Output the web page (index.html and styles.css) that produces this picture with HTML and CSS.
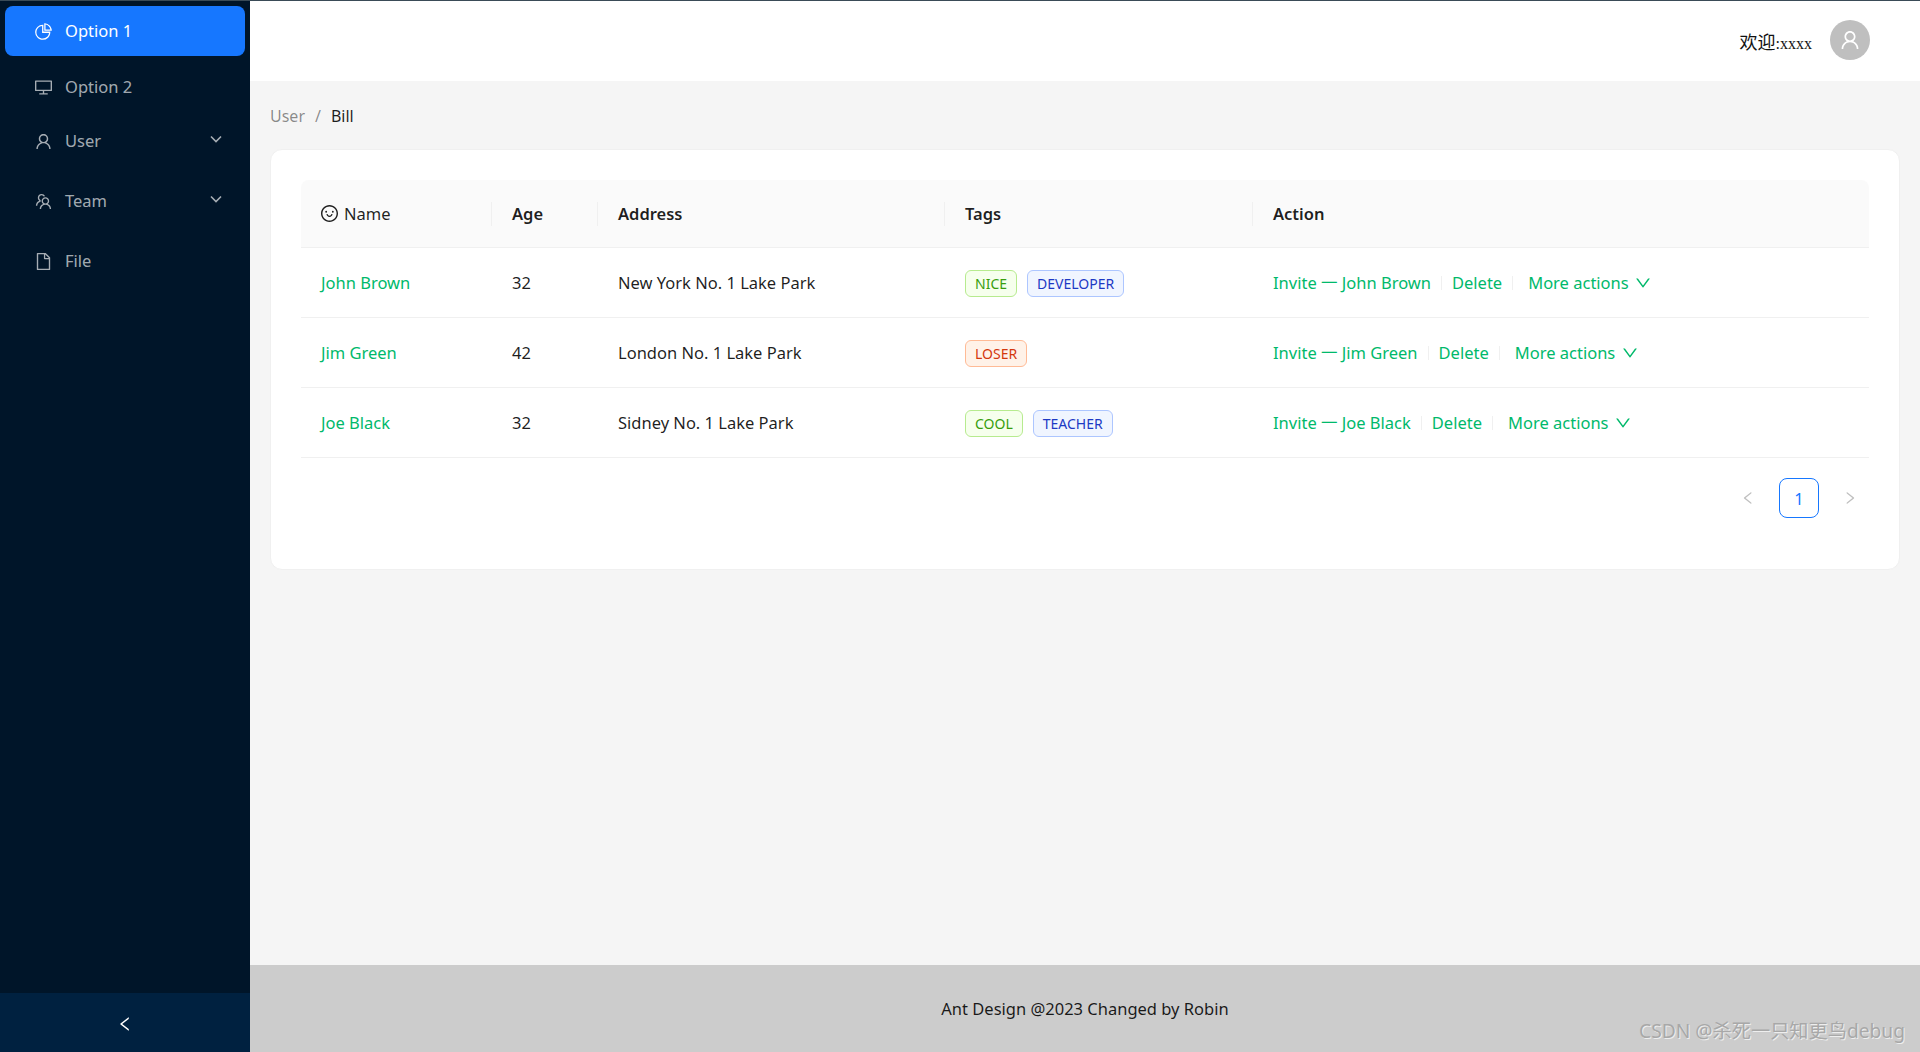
FILE: index.html
```html
<!DOCTYPE html>
<html lang="en">
<head>
<meta charset="utf-8">
<title>Bill</title>
<link rel="stylesheet" href="styles.css">
</head>
<body>
<svg class="sprite" aria-hidden="true">
  <symbol id="i-pie" viewBox="64 64 896 896"><path d="M864 518H506V160c0-4.4-3.6-8-8-8h-26a398.46 398.46 0 0 0-282.8 117.1 398.19 398.19 0 0 0-85.7 127.1A397.61 397.61 0 0 0 72 552a398.46 398.46 0 0 0 117.1 282.8c36.7 36.7 79.5 65.6 127.1 85.7A397.61 397.61 0 0 0 472 952a398.46 398.46 0 0 0 282.8-117.1c36.7-36.7 65.6-79.5 85.7-127.1A397.61 397.61 0 0 0 872 552v-26c0-4.4-3.6-8-8-8zM705.7 787.8A331.59 331.59 0 0 1 470.4 884c-88.1-.4-170.9-34.9-233.2-97.2C174.5 724.1 140 640.7 140 552c0-88.7 34.5-172.1 97.2-234.8 54.6-54.6 124.9-87.9 200.8-95.5V586h364.3c-7.7 76.3-41.3 147-96.6 201.8zM952 462.4l-2.6-28.2c-8.5-92.1-49.4-179-115.2-244.6A399.4 399.4 0 0 0 589 74.6L560.7 72c-4.7-.4-8.7 3.2-8.7 7.9V464c0 4.4 3.6 8 8 8l384-1c4.7 0 8.4-4 8-8.6zm-332.2-58.2V147.6a332.24 332.24 0 0 1 166.4 89.8c45.7 45.6 77 103.6 90 166.1l-256.4.7z"/></symbol>
  <symbol id="i-desktop" viewBox="64 64 896 896"><path d="M928 140H96c-17.7 0-32 14.3-32 32v496c0 17.7 14.3 32 32 32h380v112H304c-8.8 0-16 7.2-16 16v48c0 4.4 3.6 8 8 8h432c4.4 0 8-3.6 8-8v-48c0-8.8-7.2-16-16-16H548V700h380c17.7 0 32-14.3 32-32V172c0-17.7-14.3-32-32-32zm-40 488H136V212h752v416z"/></symbol>
  <symbol id="i-user" viewBox="64 64 896 896"><path d="M858.5 763.6a374 374 0 0 0-80.6-119.5 375.63 375.63 0 0 0-119.5-80.6c-.4-.2-.8-.3-1.2-.5C719.5 518 760 444.7 760 362c0-137-111-248-248-248S264 225 264 362c0 82.7 40.5 156 102.8 201.1-.4.2-.8.3-1.2.5-44.8 18.9-85 46-119.5 80.6a375.63 375.63 0 0 0-80.6 119.5A371.7 371.7 0 0 0 136 901.8a8 8 0 0 0 8 8.2h60c4.4 0 7.9-3.5 8-7.8 2-77.2 33-149.5 87.8-204.3 56.7-56.7 132-87.9 212.2-87.9s155.5 31.2 212.2 87.9C779 752.7 810 825 812 902.2c.1 4.4 3.6 7.8 8 7.8h60a8 8 0 0 0 8-8.2c-1-47.8-10.9-94.3-29.5-138.2zM512 534c-45.9 0-89.1-17.9-121.6-50.4S340 407.9 340 362c0-45.9 17.9-89.1 50.4-121.6S466.1 190 512 190s89.1 17.9 121.6 50.4S684 316.1 684 362c0 45.9-17.9 89.1-50.4 121.6S557.9 534 512 534z"/></symbol>
  <symbol id="i-team" viewBox="64 64 896 896"><path d="M824.2 699.9a301.55 301.55 0 0 0-86.4-60.4C783.1 602.8 812 546.8 812 484c0-110.8-92.4-201.7-203.2-200-109.1 1.7-197 90.6-197 200 0 62.8 29 118.8 74.2 155.5a300.95 300.95 0 0 0-86.4 60.4C345 754.6 314 826.8 312 903.8a8 8 0 0 0 8 8.2h56c4.3 0 7.9-3.4 8-7.7 1.9-58 25.4-112.3 66.7-153.5A226.62 226.62 0 0 1 612 684c60.9 0 118.2 23.7 161.3 66.8C814.5 792 838 846.3 840 904.3c.1 4.3 3.7 7.7 8 7.7h56a8 8 0 0 0 8-8.2c-2-77-33-149.2-87.8-203.9zM612 612c-34.2 0-66.4-13.3-90.5-37.5a126.86 126.86 0 0 1-37.5-91.8c.3-32.8 13.4-64.5 36.3-88 24-24.6 56.1-38.3 90.4-38.7 33.9-.3 66.8 12.9 91 36.6 24.8 24.3 38.4 56.8 38.4 91.4 0 34.2-13.3 66.3-37.5 90.5A127.3 127.3 0 0 1 612 612zM361.5 510.4c-.9-8.7-1.4-17.5-1.4-26.4 0-15.9 1.5-31.4 4.3-46.5.7-3.6-1.2-7.3-4.5-8.8-13.6-6.1-26.1-14.5-36.9-25.1a127.54 127.54 0 0 1-38.7-95.4c.9-32.1 13.8-62.6 36.3-85.6 24.7-25.3 57.9-39.1 93.2-38.7 31.9.3 62.7 12.6 86 34.4 7.9 7.4 14.7 15.6 20.4 24.4 2 3.1 5.9 4.4 9.3 3.2 17.6-6.1 36.2-10.4 55.3-12.4 5.6-.6 8.8-6.6 6.3-11.6-32.5-64.3-98.9-108.7-175.7-109.9-110.9-1.7-203.3 89.2-203.3 199.9 0 62.8 28.9 118.8 74.2 155.5-31.8 14.7-61.1 35-86.5 60.4-54.8 54.7-85.8 126.9-87.8 204a8 8 0 0 0 8 8.2h56.1c4.3 0 7.9-3.4 8-7.7 1.9-58 25.4-112.3 66.7-153.5 29.4-29.4 65.4-49.8 104.7-59.7 3.9-1 6.5-4.7 6-8.7z"/></symbol>
  <symbol id="i-file" viewBox="64 64 896 896"><path d="M854.6 288.6L639.4 73.4c-6-6-14.1-9.4-22.6-9.4H192c-17.7 0-32 14.3-32 32v832c0 17.7 14.3 32 32 32h640c17.7 0 32-14.3 32-32V311.3c0-8.5-3.4-16.7-9.4-22.7zM790.2 326H602V137.8L790.2 326zm1.8 562H232V136h302v216a42 42 0 0 0 42 42h216v494z"/></symbol>
  <symbol id="i-smile" viewBox="64 64 896 896"><path d="M288 421a48 48 0 1 0 96 0 48 48 0 1 0-96 0zm352 0a48 48 0 1 0 96 0 48 48 0 1 0-96 0zM512 64C264.6 64 64 264.6 64 512s200.6 448 448 448 448-200.6 448-448S759.4 64 512 64zm263 711c-34.2 34.2-74 61-118.3 79.8C611 874.2 562.3 884 512 884c-50.3 0-99-9.8-144.8-29.2A370.4 370.4 0 0 1 248.9 775c-34.2-34.2-61-74-79.8-118.3C149.8 611 140 562.3 140 512s9.8-99 29.2-144.8A370.4 370.4 0 0 1 249 248.9c34.2-34.2 74-61 118.3-79.8C413 149.8 461.7 140 512 140c50.3 0 99 9.8 144.8 29.2A370.4 370.4 0 0 1 775.1 249c34.2 34.2 61 74 79.8 118.3C874.2 413 884 461.7 884 512s-9.8 99-29.2 144.8A368.89 368.89 0 0 1 775 775zM664 533h-48.1c-4.2 0-7.8 3.2-8.1 7.4C604 589.9 562.5 629 512 629s-92.1-39.1-95.8-88.6c-.3-4.2-3.9-7.4-8.1-7.4H360a8 8 0 0 0-8 8.4c4.4 84.3 74.5 151.6 160 151.6s155.6-67.3 160-151.6a8 8 0 0 0-8-8.4z"/></symbol>
  <symbol id="i-down" viewBox="64 64 896 896"><path d="M884 256h-75c-5.1 0-9.9 2.5-12.9 6.6L512 654.2 227.9 262.6c-3-4.1-7.8-6.6-12.9-6.6h-75c-6.5 0-10.3 7.4-6.5 12.7l352.6 486.1c12.8 17.6 39 17.6 51.7 0l352.6-486.1c3.9-5.3.1-12.7-6.4-12.7z"/></symbol>
  <symbol id="i-left" viewBox="64 64 896 896"><path d="M724 218.3V141c0-6.7-7.7-10.4-12.9-6.3L260.6 486.8a31.86 31.86 0 0 0 0 50.3l450.5 352.1c5.3 4.1 12.9.4 12.9-6.3v-77.3c0-4.9-2.3-9.6-6.1-12.6l-360-281 360-281.1c3.8-3 6.1-7.7 6.1-12.6z"/></symbol>
  <symbol id="i-right" viewBox="64 64 896 896"><path d="M765.7 486.8L314.9 134.7A7.97 7.97 0 0 0 302 141v77.3c0 4.9 2.3 9.6 6.1 12.6l360 281.1-360 281.1c-3.9 3-6.1 7.7-6.1 12.6V883c0 6.7 7.7 10.4 12.9 6.3l450.8-352.1a31.96 31.96 0 0 0 0-50.4z"/></symbol>
</svg>

<div class="app">
  <aside class="sider">
    <nav class="menu">
      <a class="item active"><svg class="ico"><use href="#i-pie"/></svg><span>Option 1</span></a>
      <a class="item tight"><svg class="ico"><use href="#i-desktop"/></svg><span>Option 2</span></a>
      <a class="item sub"><svg class="ico"><use href="#i-user"/></svg><span>User</span><svg class="caret" viewBox="0 0 12 8"><path d="M1 1.5l5 5 5-5"/></svg></a>
      <a class="item sub"><svg class="ico"><use href="#i-team"/></svg><span>Team</span><svg class="caret" viewBox="0 0 12 8"><path d="M1 1.5l5 5 5-5"/></svg></a>
      <a class="item file"><svg class="ico"><use href="#i-file"/></svg><span>File</span></a>
    </nav>
    <button class="trigger"><svg class="ico"><use href="#i-left"/></svg></button>
  </aside>
  <div class="main">
    <header class="header">
      <span class="welcome">欢迎<span class="welcome-name">:xxxx</span></span>
      <span class="avatar"><svg class="ico"><use href="#i-user"/></svg></span>
    </header>
    <main class="content">
      <ol class="crumbs">
        <li class="muted">User</li>
        <li class="muted sep">/</li>
        <li>Bill</li>
      </ol>
      <section class="card">
        <table class="table">
          <colgroup><col class="c1"><col class="c2"><col class="c3"><col class="c4"><col class="c5"></colgroup>
          <thead>
            <tr>
              <th class="plain"><span class="name-head"><svg class="ico"><use href="#i-smile"/></svg>Name</span></th>
              <th>Age</th>
              <th>Address</th>
              <th>Tags</th>
              <th>Action</th>
            </tr>
          </thead>
          <tbody>
            <tr>
              <td><a class="link">John Brown</a></td>
              <td>32</td>
              <td>New York No. 1 Lake Park</td>
              <td><div class="tags"><span class="tag green">NICE</span><span class="tag blue">DEVELOPER</span></div></td>
              <td><div class="actions"><a class="link">Invite 一 John Brown</a><i class="split"></i><a class="link">Delete</a><i class="split wide"></i><a class="link more">More actions <svg class="ico"><use href="#i-down"/></svg></a></div></td>
            </tr>
            <tr>
              <td><a class="link">Jim Green</a></td>
              <td>42</td>
              <td>London No. 1 Lake Park</td>
              <td><div class="tags"><span class="tag red">LOSER</span></div></td>
              <td><div class="actions"><a class="link">Invite 一 Jim Green</a><i class="split"></i><a class="link">Delete</a><i class="split wide"></i><a class="link more">More actions <svg class="ico"><use href="#i-down"/></svg></a></div></td>
            </tr>
            <tr>
              <td><a class="link">Joe Black</a></td>
              <td>32</td>
              <td>Sidney No. 1 Lake Park</td>
              <td><div class="tags"><span class="tag green">COOL</span><span class="tag blue">TEACHER</span></div></td>
              <td><div class="actions"><a class="link">Invite 一 Joe Black</a><i class="split"></i><a class="link">Delete</a><i class="split wide"></i><a class="link more">More actions <svg class="ico"><use href="#i-down"/></svg></a></div></td>
            </tr>
          </tbody>
        </table>
        <div class="pager">
          <svg class="ico arrow"><use href="#i-left"/></svg>
          <span class="page">1</span>
          <svg class="ico arrow"><use href="#i-right"/></svg>
        </div>
      </section>
    </main>
    <footer class="footer">Ant Design @2023 Changed by Robin<span class="watermark">CSDN @杀死一只知更鸟debug</span></footer>
  </div>
</div>
</body>
</html>
```
FILE: styles.css
```css
* { box-sizing: border-box; }
html, body { margin: 0; height: 100%; }
body {
  font-family: "Noto Sans", "Noto Sans CJK SC", sans-serif;
  font-size: 16.5px;
  color: rgba(0,0,0,.88);
  background: #f5f5f5;
  overflow: hidden;
}
.sprite { display: none; }
.ico { width: 1em; height: 1em; fill: currentColor; display: inline-block; flex: none; }

.app { display: flex; height: 100%; border-top: 1px solid #3a4b57; }
.sider { width: 250px; flex: none; background: #001529; display: flex; flex-direction: column; color: rgba(255,255,255,.65); }
.menu { flex: 1; padding-top: 5px; display: flex; flex-direction: column; }
.item { height: 50px; margin: 0 5px 6px; padding-left: 30px; display: flex; align-items: center; gap: 13px; border-radius: 8px; }
.item span { margin-top: -2px; }
.item .ico { font-size: 17px; }
.item.active { background: #1677ff; color: #fff; }
.item.tight { margin-bottom: 4px; }
.item.sub { margin-bottom: 10px; }
.caret { width: 12px; height: 8px; fill: none; stroke: currentColor; stroke-width: 1.6; margin-left: auto; margin-right: 23px; margin-top: -4px; }
.trigger { height: 59px; border: 0; background: #002140; color: #fff; display: flex; align-items: center; justify-content: center; padding: 2px 0 0; font-size: 16px; }

.main { flex: 1; min-width: 0; display: flex; flex-direction: column; }
.header { height: 80px; background: #fff; display: flex; align-items: center; justify-content: flex-end; padding-right: 50px; gap: 18px; flex: none; }
.welcome { font-size: 18px; color: #111; }
.welcome-name { font-family: "Liberation Serif", serif; font-size: 16px; }
.avatar { width: 40px; height: 40px; border-radius: 50%; background: #bfbfbf; color: #fff; display: flex; align-items: center; justify-content: center; font-size: 20px; margin-top: -2px; }

.content { flex: 1; padding: 0 20px; }
.crumbs { list-style: none; margin: 0; padding: 23px 0 0; height: 68px; display: flex; gap: 10px; line-height: 24px; font-size: 16px; }
.muted { color: rgba(0,0,0,.45); }
.card { background: #fff; border-radius: 12px; height: 421px; padding: 30px 30px 0; border: 1px solid #f0f0f0; }
.table { width: 100%; border-collapse: separate; border-spacing: 0; table-layout: fixed; }
.c1 { width: 191px; } .c2 { width: 106px; } .c3 { width: 347px; } .c4 { width: 308px; }
th, td { text-align: left; padding: 0 20px; border-bottom: 1px solid #f0f0f0; }
th { height: 68px; background: #fafafa; font-weight: 600; position: relative; }
th.plain { font-weight: 400; }
th:first-child { border-top-left-radius: 8px; }
th:last-child { border-top-right-radius: 8px; }
th:not(:last-child)::after { content: ""; position: absolute; right: 0; top: 22px; height: 24px; width: 1px; background: #f0f0f0; }
td { height: 70px; }
.name-head { display: flex; align-items: center; gap: 6px; }
.name-head .ico { font-size: 17px; margin-top: -1px; }
.link { color: #00b96b; }
.tags { display: flex; gap: 10px; align-items: center; padding-top: 2px; }
.tag { font-size: 14px; line-height: 25px; height: 27px; padding: 0 9px; border-radius: 6px; border: 1px solid; }
.green { background: #f6ffed; border-color: #b7eb8f; color: #389e0d; }
.blue { background: #f0f5ff; border-color: #adc6ff; color: #1d39c4; }
.red { background: #fff2e8; border-color: #ffbb96; color: #d4380d; }
.actions { display: flex; align-items: center; white-space: nowrap; line-height: 24px; }
.split { width: 1px; height: 14px; background: #f0f0f0; margin: 0 10px; }
.split.wide { margin-right: 15px; }
.more .ico { font-size: 16px; vertical-align: -2px; margin-left: 2px; }
.pager { display: flex; justify-content: flex-end; align-items: center; gap: 24px; padding: 20px 12px 0 0; }
.pager .arrow { font-size: 14px; color: rgba(0,0,0,.25); }
.page { width: 40px; height: 40px; border: 1px solid #1677ff; color: #1677ff; border-radius: 8px; display: flex; align-items: center; justify-content: center; }
.footer { height: 87px; flex: none; background: #ccc; display: flex; align-items: center; justify-content: center; position: relative; padding-bottom: 1px; }
.watermark { position: absolute; right: 15px; bottom: 8px; font-size: 19.2px; color: #a8a8a8; text-shadow: 1px 1px 0 #eee; }
```
